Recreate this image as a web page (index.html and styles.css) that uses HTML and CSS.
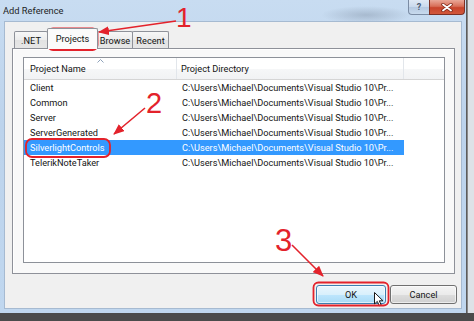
FILE: index.html
```html
<!DOCTYPE html>
<html lang="en">
<head>
  <meta charset="UTF-8">
  <meta name="viewport" content="width=device-width, initial-scale=1.0">
  <title>Add Reference</title>
  <link rel="stylesheet" href="styles.css">
</head>
<body>
  <div class="window">
    <div class="titlebar">
      <span class="title">Add Reference</span>
      <div class="caption-buttons">
        <span class="help">?</span>
        <span class="close">
          <svg width="12" height="9" viewBox="0 0 12 9">
            <path d="M2 1.5 L10 7.5 M10 1.5 L2 7.5" stroke="#7a2414" stroke-width="3.4" stroke-linecap="round"/>
            <path d="M2 1.5 L10 7.5 M10 1.5 L2 7.5" stroke="#ffffff" stroke-width="1.8" stroke-linecap="round"/>
          </svg>
        </span>
      </div>
    </div>

    <div class="client">
      <div class="tabs">
        <div class="tab tab-net">.NET</div>
        <div class="tab tab-projects selected">Projects</div>
        <div class="tab tab-browse">Browse</div>
        <div class="tab tab-recent">Recent</div>
      </div>

      <div class="panel">
        <div class="listview">
          <div class="lv-header">
            <div class="col col-name">
              Project Name
              <svg class="sort-arrow" width="7" height="4" viewBox="0 0 7 4">
                <path d="M0.5 3.5 L3.5 0.5 L6.5 3.5" fill="none" stroke="#8fa3bb" stroke-width="1"/>
              </svg>
            </div>
            <div class="col col-dir">Project Directory</div>
            <div class="col col-rest"></div>
          </div>
          <div class="row"><span class="cell name">Client</span><span class="cell dir">C:\Users\Michael\Documents\Visual Studio 10\Pr...</span></div>
          <div class="row"><span class="cell name">Common</span><span class="cell dir">C:\Users\Michael\Documents\Visual Studio 10\Pr...</span></div>
          <div class="row"><span class="cell name">Server</span><span class="cell dir">C:\Users\Michael\Documents\Visual Studio 10\Pr...</span></div>
          <div class="row"><span class="cell name">ServerGenerated</span><span class="cell dir">C:\Users\Michael\Documents\Visual Studio 10\Pr...</span></div>
          <div class="row selected"><span class="cell name">SilverlightControls</span><span class="cell dir">C:\Users\Michael\Documents\Visual Studio 10\Pr...</span></div>
          <div class="row"><span class="cell name">TelerikNoteTaker</span><span class="cell dir">C:\Users\Michael\Documents\Visual Studio 10\Pr...</span></div>
        </div>
      </div>

      <div class="buttons">
        <button class="btn btn-ok">OK</button>
        <button class="btn btn-cancel">Cancel</button>
      </div>
    </div>
  </div>

  <!-- mouse pointer over the OK button -->
  <svg class="cursor" width="11" height="15" viewBox="0 0 11 15">
    <path d="M0.5 0.5 L0.5 12 L3.3 9.4 L5.3 13.8 L7.2 13 L5.3 8.8 L9 8.8 Z" fill="#ffffff" stroke="#1a1a1a" stroke-width="1" stroke-linejoin="round"/>
  </svg>

  <!-- red callouts drawn on top of the screenshot -->
  <svg class="annotations" width="474" height="321" viewBox="0 0 474 321">
    <defs>
      <marker id="head" markerUnits="userSpaceOnUse" markerWidth="11" markerHeight="9" refX="10" refY="4.5" orient="auto">
        <path d="M0 0 L11 4.5 L0 9 Z" fill="#e3222b"/>
      </marker>
    </defs>
    <rect class="mark" x="48" y="28.5" width="49.5" height="21.5" rx="5"/>
    <rect class="mark" x="26" y="139" width="84" height="18" rx="6"/>
    <rect class="mark" x="313.5" y="282.5" width="75" height="23" rx="5"/>

    <line class="arrow" x1="176" y1="21" x2="99" y2="32" marker-end="url(#head)"/>
    <line class="arrow" x1="145" y1="108" x2="114" y2="134" marker-end="url(#head)"/>
    <line class="arrow" x1="292" y1="245" x2="323" y2="276" marker-end="url(#head)"/>

    <text class="num" x="176" y="27" font-size="28">1</text>
    <text class="num" x="146" y="113" font-size="29">2</text>
    <text class="num" x="275" y="251" font-size="31">3</text>
  </svg>
</body>
</html>
```

FILE: styles.css
```css
* {
  box-sizing: border-box;
}
body {
  margin: 0;
  width: 474px;
  height: 321px;
  overflow: hidden;
  position: relative;
  font-family: Roboto, "Liberation Sans", sans-serif;
  font-size: 9.2px;
  color: #141414;
  background: linear-gradient(#dde2e7 0, #dde2e7 313px, #4b4b4b 313px);
}
.window {
  width: 466px;
  height: 313px;
  display: flex;
  flex-direction: column;
  padding: 0 4px 4px 4px;
  background: linear-gradient(#c8dcf1, #bcd3ec 40%, #c0d7ef);
  box-shadow: 1px 0 0 #5c5c5c, 2px 0 0 #8a8a8a;
}
.titlebar {
  height: 21px;
  display: flex;
  justify-content: space-between;
  align-items: flex-start;
  background: radial-gradient(ellipse 45px 9px at 362px 15px, rgba(110, 125, 145, 0.35), transparent);
}
.title {
  margin-left: -1px;
  padding-top: 5px;
  font-size: 9.3px;
  color: #1e1e1e;
}
.caption-buttons {
  display: flex;
  height: 15px;
  margin-right: -3px;
}
.help {
  width: 21px;
  height: 15px;
  display: flex;
  align-items: center;
  justify-content: center;
  font-size: 9px;
  font-weight: bold;
  color: #4a5a72;
  border: 1px solid #7b8ca4;
  border-top: none;
  border-right: none;
  border-radius: 0 0 0 4px;
  background: linear-gradient(#dfe9f5, #c9d9ec 50%, #b5c9e1 51%, #c8daee);
}
.close {
  width: 36px;
  height: 15px;
  display: flex;
  align-items: center;
  justify-content: center;
  border: 1px solid #7d3024;
  border-top: none;
  border-radius: 0 0 4px 0;
  background: linear-gradient(#e9a898, #d86f58 45%, #c8442b 55%, #d2583c);
}
.client {
  flex: 1;
  display: flex;
  flex-direction: column;
  background: #f0f0f0;
  border: 1px solid #a6bad1;
}
.tabs {
  display: flex;
  align-items: flex-end;
  height: 20px;
  margin: 6px 0 0 9px;
}
.tab {
  height: 17px;
  display: flex;
  align-items: center;
  justify-content: center;
  margin-left: -1px;
  border: 1px solid #8e9199;
  border-bottom: none;
  border-radius: 2px 2px 0 0;
  background: linear-gradient(#f7f7f7, #ececec 50%, #e2e2e2 51%, #e6e6e6);
}
.tab-net {
  width: 34px;
  margin-left: 0;
}
.tab-projects {
  width: 51px;
}
.tab-browse {
  width: 36px;
}
.tab-recent {
  width: 37px;
}
.tab.selected {
  height: 21px;
  margin-bottom: -1px;
  position: relative;
  z-index: 1;
  background: #fbfbfb;
  padding-bottom: 2px;
}
.panel {
  width: 443px;
  height: 226px;
  margin-left: 7px;
  display: flex;
  padding: 8px 9px 10px 10px;
  border: 1px solid #8e9199;
  background: #f9f9f9;
  box-shadow: inset 1px 1px 0 #ffffff;
}
.listview {
  flex: 1;
  border: 1px solid #8d9199;
  background: #ffffff;
}
.lv-header {
  display: flex;
  height: 22px;
  border-bottom: 1px solid #d5d5d5;
  background: linear-gradient(#ffffff, #ffffff 50%, #f6f7f8 51%, #f1f2f4);
}
.col {
  position: relative;
  padding: 2px 0 0 6px;
  line-height: 18px;
  border-right: 1px solid #e2e6eb;
}
.col-name {
  width: 153px;
}
.col-dir {
  width: 227px;
  padding-left: 4px;
}
.col-rest {
  flex: 1;
  border-right: none;
}
.sort-arrow {
  position: absolute;
  left: 73px;
  top: 1px;
}
.row {
  display: flex;
  width: 380px;
  height: 15px;
  line-height: 15px;
  white-space: nowrap;
}
.cell.name {
  width: 153px;
  padding-left: 6px;
}
.cell.dir {
  width: 227px;
  padding-left: 5px;
}
.row.selected {
  background: #3399ff;
  color: #ffffff;
}
.buttons {
  display: flex;
  justify-content: flex-end;
  gap: 4px;
  margin: 11px 4px 0 0;
}
.btn {
  height: 19px;
  padding: 0;
  font: inherit;
  color: #141414;
  border-radius: 3px;
}
.btn-ok {
  width: 70px;
  border: 1px solid #3c7fb1;
  background: linear-gradient(#eaf6fd, #d9f0fc 50%, #bee6fd 51%, #a9dbf6);
  box-shadow: inset 0 0 0 1px rgba(255, 255, 255, 0.6);
}
.btn-cancel {
  width: 67px;
  border: 1px solid #707070;
  background: linear-gradient(#f4f4f4, #ebebeb 50%, #dddddd 51%, #d0d0d0);
  box-shadow: inset 0 0 0 1px rgba(255, 255, 255, 0.6);
}
.cursor {
  position: absolute;
  left: 374px;
  top: 292px;
}
.annotations {
  position: absolute;
  left: 0;
  top: 0;
  pointer-events: none;
}
.mark {
  fill: none;
  stroke: #e3222b;
  stroke-width: 1.8;
}
.arrow {
  stroke: #e3222b;
  stroke-width: 1.6;
}
.num {
  font-family: "Liberation Sans", Arial, sans-serif;
  fill: #e3222b;
}
```
